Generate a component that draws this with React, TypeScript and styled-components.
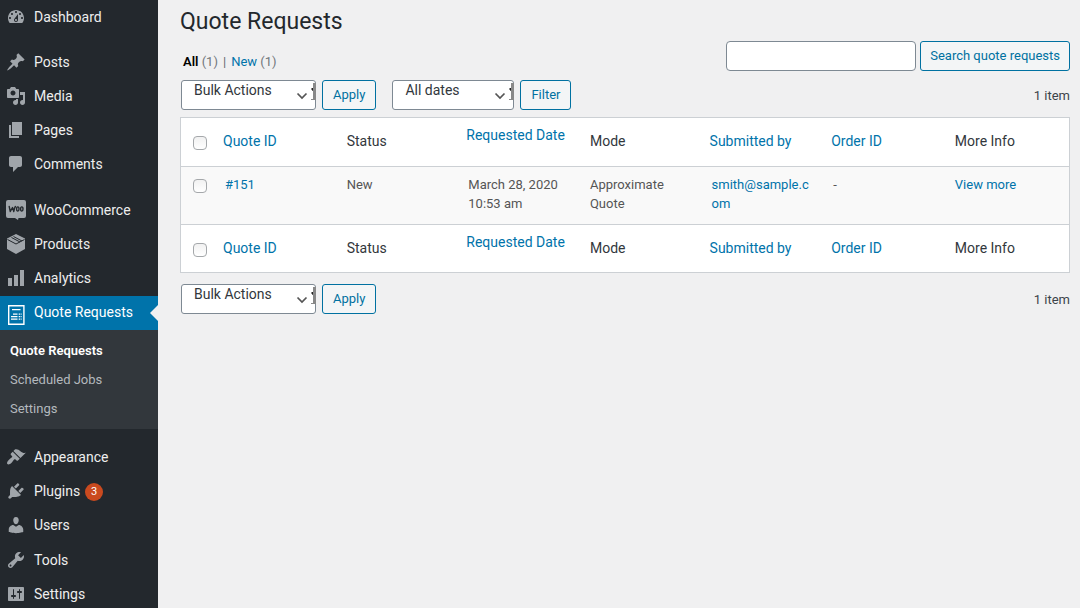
import React from 'react';
import styled, { createGlobalStyle } from 'styled-components';

const Global = createGlobalStyle`
  *, *::before, *::after { box-sizing: border-box; }
  body {
    margin: 0;
    background: #f0f0f1;
    color: #3c434a;
    font-family: Roboto, "Liberation Sans", sans-serif;
    font-size: 13px;
    line-height: 19px;
  }
  a { color: #0073aa; text-decoration: none; }
  button, input, select { font-family: inherit; }
`;

const Page = styled.div`
  display: flex;
  min-height: 100vh;
`;

const Sidebar = styled.nav`
  flex: none;
  width: 158px;
  background: #23282d;
`;

const MenuList = styled.ul`
  list-style: none;
  margin: 0;
  padding: 0 0 12px;
`;

const MenuItem = styled.li<{ $gap?: number }>`
  margin-top: ${p => p.$gap ?? 0}px;
`;

const MenuLink = styled.a<{ $current?: boolean }>`
  position: relative;
  display: flex;
  align-items: center;
  gap: 8px;
  height: 34px;
  padding: 0 6px ${p => (p.$current ? 2 : 0)}px;
  font-size: 14px;
  color: ${p => (p.$current ? '#fff' : '#eee')};
  background: ${p => (p.$current ? '#0073aa' : 'transparent')};
`;

const CurrentArrow = styled.span`
  position: absolute;
  right: 0;
  top: 9px;
  border: 8px solid transparent;
  border-left: 0;
  border-right-color: #f0f0f1;
`;

const MenuIcon = styled.svg<{ $current?: boolean }>`
  flex: none;
  width: 20px;
  height: 20px;
  fill: ${p => (p.$current ? '#fff' : '#a0a5aa')};
`;

const MenuLabel = styled.span`
  display: flex;
  align-items: center;
  gap: 5px;
`;

const Badge = styled.span`
  width: 18px;
  height: 18px;
  margin-top: 2px;
  border-radius: 9px;
  background: #ca4a1f;
  color: #fff;
  font-size: 11px;
  line-height: 18px;
  text-align: center;
`;

const SubMenu = styled.ul`
  list-style: none;
  margin: 0;
  padding: 6px 0;
  background: #32373c;
`;

const SubLink = styled.a<{ $current?: boolean }>`
  display: block;
  padding: 5px 10px;
  font-weight: ${p => (p.$current ? 600 : 400)};
  color: ${p => (p.$current ? '#fff' : '#b4b9be')};
`;

const Main = styled.main`
  flex: 1;
  min-width: 0;
  padding: 7px 10px 20px 22px;
`;

const Title = styled.h1`
  margin: 0;
  color: #23282d;
  font-size: 23px;
  font-weight: 400;
  line-height: 30px;
`;

const TopBar = styled.div`
  display: flex;
  justify-content: space-between;
  align-items: flex-start;
  margin-top: 4px;
`;

const Views = styled.div`
  display: flex;
  gap: 5px;
  padding: 11px 3px 0;
  color: #646970;
`;

const CurrentView = styled.a`
  color: #000;
  font-weight: 600;
`;

const Count = styled.span`
  color: #72777c;
`;

const SearchForm = styled.form`
  display: flex;
  gap: 4px;
`;

const SearchInput = styled.input`
  width: 190px;
  height: 30px;
  padding: 0 8px;
  border: 1px solid #7e8993;
  border-radius: 4px;
  background: #fff;
  font-size: 14px;
`;

const Button = styled.button`
  height: 30px;
  padding: 0 10px 2px;
  border: 1px solid #0071a1;
  border-radius: 3px;
  background: #f3f5f6;
  color: #0071a1;
  font-size: 13px;
`;

const SearchButton = styled(Button)`
  padding: 0 9px 2px;
`;

const TableNav = styled.div<{ $bottom?: boolean }>`
  display: flex;
  align-items: center;
  margin: ${p => (p.$bottom ? 11 : 9)}px 0 7px;
`;

const Actions = styled.div`
  display: flex;
  gap: 6px;
  margin-right: 15px;
  padding-left: 1px;
`;

const ItemCount = styled.span`
  margin-left: auto;
`;

const SelectBox = styled.span<{ $width: number }>`
  position: relative;
  width: ${p => p.$width}px;
  height: 30px;
`;

const Select = styled.select`
  appearance: none;
  width: 100%;
  height: 30px;
  padding: 0 24px 10px 12px;
  border: 1px solid #7e8993;
  border-radius: 3px;
  background: #fff;
  color: #32373c;
  font-size: 14px;
`;

const SelectMarks = styled.svg`
  position: absolute;
  right: 0;
  top: 0;
  width: 24px;
  height: 30px;
  pointer-events: none;
`;

const Table = styled.table`
  width: 100%;
  table-layout: fixed;
  border-collapse: separate;
  border-spacing: 0;
  border: 1px solid #ccd0d4;
  background: #fff;

  th, td {
    text-align: left;
    vertical-align: top;
    font-weight: 400;
    overflow-wrap: anywhere;
  }
  td { padding: 8px 10px 11px 12px; }
  thead th { height: 49px; border-bottom: 1px solid #ccd0d4; }
  tfoot th { height: 48px; border-top: 1px solid #ccd0d4; }
`;

const CheckColumn = styled.col`
  width: 32px;
`;

const DataColumn = styled.col`
  width: 13.7%;
`;

const Row = styled.tr`
  background: #f9f9f9;
  color: #555;
`;

const HeadCell = styled.th<{ $raised?: boolean; $plain?: boolean }>`
  padding: ${p => (p.$raised ? 8 : 14)}px 0 0 ${p => (p.$plain ? 12 : 10)}px;
  color: #32373c;
  font-size: 14px;
`;

const CheckHead = styled.th`
  padding: 18px 0 0 12px;
`;

const CheckCell = styled.td`
  && { padding: 12px 0 0 12px; }
`;

const Checkbox = styled.input`
  appearance: none;
  display: block;
  width: 14px;
  height: 14px;
  margin: 0;
  border: 1px solid #a5a8ab;
  border-radius: 4px;
  background: linear-gradient(#f1f1f1, #fff);
`;

const icons: Record<string, React.ReactNode> = {
  dashboard: <path d="M3.76 16h12.48c1.1-1.37 1.76-3.11 1.76-5 0-4.42-3.58-8-8-8s-8 3.58-8 8c0 1.89.66 3.63 1.76 5zM10 4c.55 0 1 .45 1 1s-.45 1-1 1-1-.45-1-1 .45-1 1-1zM6 6c.55 0 1 .45 1 1s-.45 1-1 1-1-.45-1-1 .45-1 1-1zm8 0c.55 0 1 .45 1 1s-.45 1-1 1-1-.45-1-1 .45-1 1-1zm-5.37 5.55L12 7v6c0 1.1-.9 2-2 2s-2-.9-2-2c0-.57.24-1.08.63-1.45zM4 10c.55 0 1 .45 1 1s-.45 1-1 1-1-.45-1-1 .45-1 1-1zm12 0c.55 0 1 .45 1 1s-.45 1-1 1-1-.45-1-1 .45-1 1-1zm-5 3c0-.55-.45-1-1-1s-1 .45-1 1 .45 1 1 1 1-.45 1-1z" />,
  posts: <path d="M10.44 3.02l1.82-1.82 6.36 6.35-1.83 1.82c-1.05-.68-2.48-.57-3.41.36l-.75.75c-.92.93-1.04 2.35-.35 3.41l-1.83 1.82-2.41-2.41-2.8 2.79c-.42.42-3.38 2.71-3.8 2.29s1.86-3.39 2.28-3.81l2.79-2.79L4.1 9.36l1.83-1.82c1.05.69 2.48.57 3.4-.36l.75-.75c.93-.92 1.05-2.35.36-3.41z" />,
  media: <path fillRule="evenodd" d="M13 11V4c0-.55-.45-1-1-1h-1.67L9 1H5L3.67 3H2c-.55 0-1 .45-1 1v7c0 .55.45 1 1 1h10c.55 0 1-.45 1-1zM7 4.5c1.38 0 2.5 1.12 2.5 2.5S8.38 9.5 7 9.5 4.5 8.38 4.5 7 5.62 4.5 7 4.5zM14 6h5v10.5c0 1.38-1.12 2.5-2.5 2.5S14 17.88 14 16.5s1.12-2.5 2.5-2.5c.17 0 .34.02.5.05V9h-3V6zm-4 8.05V13h2v3.5c0 1.38-1.12 2.5-2.5 2.5S7 17.88 7 16.5 8.12 14 9.5 14c.17 0 .34.02.5.05z" />,
  pages: <path d="M6 15V2h10v13H6zm-1 1h8v2H3V5h2v11z" />,
  comments: <path d="M5 2h9c1.1 0 2 .9 2 2v7c0 1.1-.9 2-2 2h-2l-5 5v-5H5c-1.1 0-2-.9-2-2V4c0-1.1.9-2 2-2z" />,
  woo: (
    <>
      <path d="M2 0h16q2 0 2 2v14q0 2-2 2h-5.500l-.500 2-3-2H2q-2 0-2-2V2q0-2 2-2z" />
      <g fill="none" stroke="#23282d" strokeWidth="1.4" strokeLinecap="round" strokeLinejoin="round">
        <path d="M3.200 6.500l1.100 5 2.200-4 1.300 4q.500-3.500 1.600-5" />
        <ellipse cx="11.800" cy="9" rx="1.200" ry="2.100" />
        <ellipse cx="15.800" cy="9" rx="1.200" ry="2.100" />
      </g>
    </>
  ),
  products: (
    <>
      <path d="M10 0l9 4.500v10.500l-9 5-9-5V4.500z" />
      <path d="M1.500 5.500l8.500 4.500 8.500-4.500M5.500 3.500l8.500 4.500M7.500 2.500l8.500 4.500" fill="none" stroke="#23282d" strokeWidth="1" />
    </>
  ),
  analytics: <path d="M18 18V2h-4v16h4zm-6 0V7H8v11h4zm-6 0v-8H2v8h4z" />,
  quote: (
    <g transform="translate(0 3)">
      <path fillRule="evenodd" d="M2 0h16.600v20H2zM3.400 1.400v17.200h13.800V1.400z" />
      <path d="M6 4h8.500v1.300H6zM7 8.500h4.500v1.300H7zM5 11h6.500v1.300H5zM5 13.500h6.500v1.300H5zM12.700 8.500H14v1.300h-1.300zM12.700 11H14v1.300h-1.300zM12.700 13.500H14v1.300h-1.300zM14.600 8.500h1v1.300h-1zM14.600 11h1v1.300h-1zM14.600 13.500h1v1.300h-1z" />
    </g>
  ),
  appearance: <path d="M14.48 11.06L7.41 3.99l1.5-1.5c.5-.56 2.3-.47 3.51.32 1.21.8 1.43 1.28 2.91 2.1 1.18.64 2.45 1.26 4.45.85zm-.71.71L6.7 4.7 4.93 6.47c-.39.39-.39 1.02 0 1.41l1.06 1.06c.39.39.39 1.03 0 1.42-.6.6-1.43 1.11-2.21 1.69-.35.26-.7.53-1.01.84C1.43 14.23.4 16.08 1.4 17.07c.99 1 2.84-.03 4.18-1.36.31-.31.58-.66.85-1.02.57-.78 1.08-1.61 1.69-2.21.39-.39 1.02-.39 1.41 0l1.06 1.06c.39.39 1.02.39 1.41 0z" />,
  plugins: <path d="M13.11 4.36L9.87 7.6 8 5.73l3.24-3.24c.35-.34 1.05-.2 1.56.32.52.51.66 1.21.31 1.55zm-8 1.77l.91-1.12 9.01 9.01-1.19.84c-.71.71-2.63 1.16-3.82 1.16H6.14L4.9 17.26c-.59.59-1.54.59-2.12 0-.59-.58-.59-1.53 0-2.12l1.24-1.24v-3.88c0-1.13.4-3.19 1.09-3.89zm7.26 3.97l3.24-3.24c.34-.35 1.04-.21 1.55.31.52.51.66 1.21.31 1.55l-3.24 3.25z" />,
  users: <path d="M10 9.25c-2.27 0-2.73-3.44-2.73-3.44C7 4.02 7.82 2 9.97 2c2.16 0 2.98 2.02 2.71 3.81 0 0-.41 3.44-2.68 3.44zm0 2.57L12.72 10c2.39 0 4.52 2.33 4.52 4.53v2.49s-3.65 1.13-7.24 1.13c-3.65 0-7.24-1.13-7.24-1.13v-2.49c0-2.25 1.94-4.48 4.47-4.48z" />,
  tools: <path d="M16.68 9.77c-1.34 1.34-3.3 1.67-4.95.99l-5.41 6.52c-.99.99-2.59.99-3.58 0s-.99-2.59 0-3.57l6.52-5.42c-.68-1.65-.35-3.61.99-4.95 1.28-1.28 3.12-1.62 4.72-1.06l-2.89 2.89 2.82 2.82 2.86-2.87c.53 1.58.18 3.39-1.08 4.65zM3.81 16.21c.4.39 1.04.39 1.43 0 .4-.4.4-1.04 0-1.43-.39-.4-1.03-.4-1.43 0-.39.39-.39 1.03 0 1.43z" />,
  settings: <path d="M18 16V4c0-.55-.45-1-1-1H3c-.55 0-1 .45-1 1v12c0 .55.45 1 1 1h14c.55 0 1-.45 1-1zM8 11h1c.55 0 1 .45 1 1s-.45 1-1 1H8v1.5c0 .28-.22.5-.5.5s-.5-.22-.5-.5V13H6c-.55 0-1-.45-1-1s.45-1 1-1h1V5.5c0-.28.22-.5.5-.5s.5.22.5.5V11zm5-2h-1c-.55 0-1-.45-1-1s.45-1 1-1h1V5.5c0-.28.22-.5.5-.5s.5.22.5.5V7h1c.55 0 1 .45 1 1s-.45 1-1 1h-1v5.5c0 .28-.22.5-.5.5s-.5-.22-.5-.5V9z" />,
};

const menu = [
  { icon: 'dashboard', label: 'Dashboard' },
  { icon: 'posts', label: 'Posts', gap: 11 },
  { icon: 'media', label: 'Media' },
  { icon: 'pages', label: 'Pages' },
  { icon: 'comments', label: 'Comments' },
  { icon: 'woo', label: 'WooCommerce', gap: 12 },
  { icon: 'products', label: 'Products' },
  { icon: 'analytics', label: 'Analytics' },
  { icon: 'quote', label: 'Quote Requests', gap: 1, current: true, sub: ['Quote Requests', 'Scheduled Jobs', 'Settings'] },
  { icon: 'appearance', label: 'Appearance', gap: 11 },
  { icon: 'plugins', label: 'Plugins', badge: 3 },
  { icon: 'users', label: 'Users' },
  { icon: 'tools', label: 'Tools', gap: 1 },
  { icon: 'settings', label: 'Settings' },
];

function AdminSelect({ label, option, width }: { label: string; option: string; width: number }) {
  return (
    <SelectBox $width={width}>
      <Select aria-label={label}>
        <option>{option}</option>
      </Select>
      <SelectMarks viewBox="0 0 24 30" aria-hidden="true">
        <path d="M5.500 13.500l4.500 4.500 4.500-4.500" fill="none" stroke="#555" strokeWidth="1.700" />
        <path d="M21 3h3v17h-5v-1h2z" fill="#888" />
        <path d="M19.500 8H21v3h-.700v-1h-.800z" fill="#222" />
      </SelectMarks>
    </SelectBox>
  );
}

function HeaderRow({ position }: { position: string }) {
  return (
    <tr>
      <CheckHead><Checkbox type="checkbox" aria-label={`Select all (${position})`} /></CheckHead>
      <HeadCell scope="col"><a href="#quote-id">Quote ID</a></HeadCell>
      <HeadCell scope="col" $plain>Status</HeadCell>
      <HeadCell scope="col" $raised><a href="#date">Requested Date</a></HeadCell>
      <HeadCell scope="col" $plain>Mode</HeadCell>
      <HeadCell scope="col"><a href="#submitted-by">Submitted by</a></HeadCell>
      <HeadCell scope="col"><a href="#order-id">Order ID</a></HeadCell>
      <HeadCell scope="col" $plain>More Info</HeadCell>
    </tr>
  );
}

export default function App() {
  return (
    <>
      <Global />
      <Page>
        <Sidebar aria-label="Main menu">
          <MenuList>
            {menu.map(item => (
              <MenuItem key={item.label} $gap={item.gap}>
                <MenuLink href="#menu" $current={item.current}>
                  <MenuIcon viewBox="0 0 20 20" $current={item.current} overflow="visible" aria-hidden="true">
                    {icons[item.icon]}
                  </MenuIcon>
                  <MenuLabel>
                    {item.label}
                    {item.badge && <Badge>{item.badge}</Badge>}
                  </MenuLabel>
                  {item.current && <CurrentArrow />}
                </MenuLink>
                {item.sub && (
                  <SubMenu>
                    {item.sub.map((label, i) => (
                      <li key={label}><SubLink href="#submenu" $current={i === 0}>{label}</SubLink></li>
                    ))}
                  </SubMenu>
                )}
              </MenuItem>
            ))}
          </MenuList>
        </Sidebar>
        <Main>
          <Title>Quote Requests</Title>
          <TopBar>
            <Views>
              <span><CurrentView href="#all">All</CurrentView> <Count>(1)</Count></span>
              <span>|</span>
              <a href="#new">New <Count>(1)</Count></a>
            </Views>
            <SearchForm>
              <SearchInput type="search" aria-label="Search quote requests" />
              <SearchButton type="button">Search quote requests</SearchButton>
            </SearchForm>
          </TopBar>
          <TableNav>
            <Actions>
              <AdminSelect label="Bulk action" option="Bulk Actions" width={135} />
              <Button type="button">Apply</Button>
            </Actions>
            <Actions>
              <AdminSelect label="Filter by date" option="All dates" width={122} />
              <Button type="button">Filter</Button>
            </Actions>
            <ItemCount>1 item</ItemCount>
          </TableNav>
          <Table>
            <colgroup>
              <CheckColumn />
              <DataColumn /><DataColumn /><DataColumn />
              <DataColumn /><DataColumn /><DataColumn />
              <col />
            </colgroup>
            <thead><HeaderRow position="top" /></thead>
            <tbody>
              <Row>
                <CheckCell><Checkbox type="checkbox" aria-label="Select #151" /></CheckCell>
                <td><a href="#151">#151</a></td>
                <td>New</td>
                <td>March 28, 2020 10:53 am</td>
                <td>Approximate Quote</td>
                <td><a href="#mail">smith@sample.com</a></td>
                <td>-</td>
                <td><a href="#more">View more</a></td>
              </Row>
            </tbody>
            <tfoot><HeaderRow position="bottom" /></tfoot>
          </Table>
          <TableNav $bottom>
            <Actions>
              <AdminSelect label="Bulk action (bottom)" option="Bulk Actions" width={135} />
              <Button type="button">Apply</Button>
            </Actions>
            <ItemCount>1 item</ItemCount>
          </TableNav>
        </Main>
      </Page>
    </>
  );
}
